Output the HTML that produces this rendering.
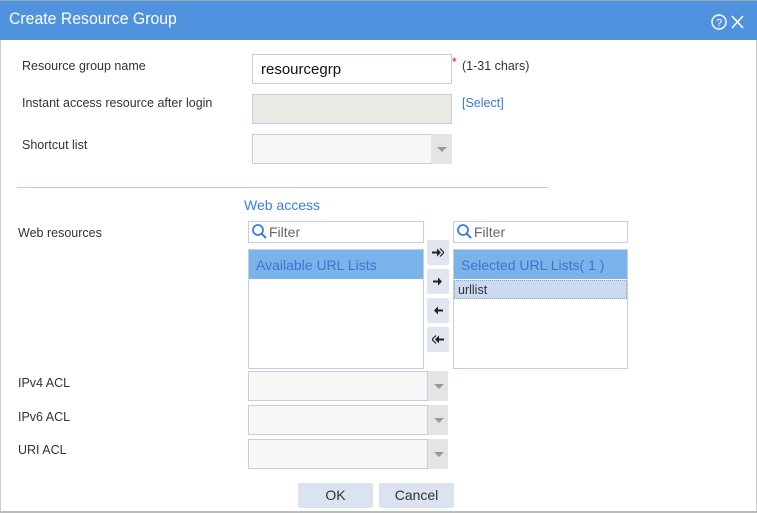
<!DOCTYPE html>
<html><head><style>
*{margin:0;padding:0;box-sizing:border-box}
body{width:757px;height:513px;background:#fff;font-family:"Liberation Sans",sans-serif;position:relative;overflow:hidden;font-size:12px;color:#333}
.a{position:absolute}
.hdr{left:0;top:0;width:757px;height:40px;background:#4f93de;border-top:1px solid #9ab}
.lbl{font-size:12.5px;color:#333}
.box{border:1px solid #c3cfe0;background:#fff}
.sel{border:1px solid #c3cfe0;background:#f7f7f7}
.arr{background:#e4e4e4}
.arr:after{content:"";position:absolute;left:6px;top:13px;border-left:5px solid transparent;border-right:5px solid transparent;border-top:5px solid #999}
.mb{width:22px;height:25px;background:#e0e5ef;border-radius:2px}
.mb svg{position:absolute;left:5px;top:7px}
.btn{height:25px;background:#dbe3f0;border-radius:2px;font-size:14px;text-align:center;line-height:25px;color:#333}
</style></head><body>
<div class="a hdr"></div>
<div class="a" style="left:9px;top:9px;color:#fff;font-size:17px;transform:scaleX(0.93);transform-origin:left">Create Resource Group</div>
<svg class="a" style="left:711px;top:13px" width="36" height="18"><circle cx="8" cy="9" r="7" fill="none" stroke="#fff" stroke-width="1.4"/><text x="8" y="13.5" fill="#fff" font-size="11" text-anchor="middle" font-family="Liberation Sans">?</text><path d="M21 3L32 15M32 3L21 15" stroke="#fff" stroke-width="1.5"/></svg>
<div class="a" style="left:0;top:40px;width:1px;height:473px;background:#ccc"></div>
<div class="a" style="left:756px;top:40px;width:1px;height:473px;background:#ccc"></div>
<div class="a" style="left:0;top:511px;width:757px;height:2px;background:#bbb"></div>

<div class="a lbl" style="left:22px;top:59px">Resource group name</div>
<div class="a box" style="left:252px;top:54px;width:200px;height:30px"></div>
<div class="a" style="left:261px;top:61px;font-size:15px;color:#111">resourcegrp</div>
<div class="a" style="left:452px;top:55px;color:red;font-size:12px">*</div>
<div class="a lbl" style="left:462px;top:59px">(1-31 chars)</div>

<div class="a lbl" style="left:22px;top:96px">Instant access resource after login</div>
<div class="a" style="left:252px;top:94px;width:200px;height:30px;background:#ebe9e4;border:1px solid #c3cfe0"></div>
<div class="a lbl" style="left:462px;top:96px;color:#3a78d0">[Select]</div>

<div class="a lbl" style="left:22px;top:138px">Shortcut list</div>
<div class="a sel" style="left:252px;top:134px;width:180px;height:30px"></div>
<div class="a arr" style="left:431px;top:134px;width:21px;height:30px"></div>

<div class="a" style="left:17px;top:187px;width:531px;height:1px;background:#b8cce4"></div>
<div class="a" style="left:244px;top:197px;font-size:14px;color:#3a7fd5">Web access</div>

<div class="a lbl" style="left:18px;top:226px">Web resources</div>
<div class="a box" style="left:248px;top:221px;width:176px;height:22px"></div>
<div class="a box" style="left:453px;top:221px;width:175px;height:22px"></div>
<svg class="a" style="left:251px;top:223px" width="18" height="18"><circle cx="7" cy="7" r="5" fill="none" stroke="#3a7fd5" stroke-width="1.8"/><path d="M10.5 10.5L15 15" stroke="#3a7fd5" stroke-width="2"/></svg>
<svg class="a" style="left:456px;top:223px" width="18" height="18"><circle cx="7" cy="7" r="5" fill="none" stroke="#3a7fd5" stroke-width="1.8"/><path d="M10.5 10.5L15 15" stroke="#3a7fd5" stroke-width="2"/></svg>
<div class="a" style="left:269px;top:224px;font-size:14px;color:#666">Filter</div>
<div class="a" style="left:474px;top:224px;font-size:14px;color:#666">Filter</div>

<div class="a box" style="left:248px;top:249px;width:176px;height:120px"></div>
<div class="a" style="left:249px;top:250px;width:174px;height:29px;background:#7ab2ea"></div>
<div class="a" style="left:256px;top:257px;font-size:14px;color:#3a78d0">Available URL Lists</div>
<div class="a box" style="left:453px;top:249px;width:175px;height:120px"></div>
<div class="a" style="left:454px;top:250px;width:173px;height:29px;background:#7ab2ea"></div>
<div class="a" style="left:461px;top:257px;font-size:14px;color:#3a78d0">Selected URL Lists( 1 )</div>
<div class="a" style="left:454px;top:280px;width:173px;height:19px;background:#cbd9f1;border:1px dotted #8aa"></div>
<div class="a" style="left:458px;top:283px;font-size:12.5px;color:#333">urllist</div>

<div class="a mb" style="left:427px;top:240px"><svg width="12" height="11"><path d="M0 5.5H6" stroke="#222" stroke-width="2"/><path d="M5 1.5L9 5.5L5 9.5Z" fill="#222"/><path d="M8 1.5L12 5.5L8 9.5" fill="none" stroke="#222" stroke-width="1.2"/></svg></div>
<div class="a mb" style="left:427px;top:269px"><svg width="12" height="11"><path d="M1 5.5H7" stroke="#222" stroke-width="2"/><path d="M6 1.5L10 5.5L6 9.5Z" fill="#222"/></svg></div>
<div class="a mb" style="left:427px;top:298px"><svg width="12" height="11"><path d="M5 5.5H11" stroke="#222" stroke-width="2"/><path d="M6 1.5L2 5.5L6 9.5Z" fill="#222"/></svg></div>
<div class="a mb" style="left:427px;top:327px"><svg width="12" height="11"><path d="M6 5.5H12" stroke="#222" stroke-width="2"/><path d="M7 1.5L3 5.5L7 9.5Z" fill="#222"/><path d="M4 1.5L0 5.5L4 9.5" fill="none" stroke="#222" stroke-width="1.2"/></svg></div>

<div class="a lbl" style="left:18px;top:376px">IPv4 ACL</div>
<div class="a sel" style="left:248px;top:371px;width:180px;height:30px"></div>
<div class="a arr" style="left:428px;top:371px;width:20px;height:30px"></div>
<div class="a lbl" style="left:18px;top:410px">IPv6 ACL</div>
<div class="a sel" style="left:248px;top:405px;width:180px;height:30px"></div>
<div class="a arr" style="left:428px;top:405px;width:20px;height:30px"></div>
<div class="a lbl" style="left:18px;top:443px">URI ACL</div>
<div class="a sel" style="left:248px;top:439px;width:180px;height:30px"></div>
<div class="a arr" style="left:428px;top:439px;width:20px;height:30px"></div>

<div class="a btn" style="left:298px;top:483px;width:75px">OK</div>
<div class="a btn" style="left:379px;top:483px;width:75px">Cancel</div>
</body></html>
